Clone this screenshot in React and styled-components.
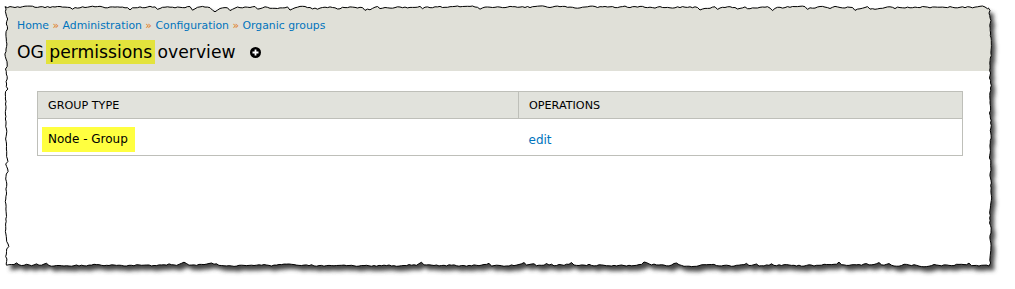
import React, { useMemo } from "react";
import styled, { createGlobalStyle } from "styled-components";

const Global = createGlobalStyle`
  html, body { margin: 0; padding: 0; background: #fff; }
  body { font-family: "DejaVu Sans", Verdana, sans-serif; }
`;

const PAPER_W = 989;
const PAPER_H = 263;

function makeEdge() {
  let seed = 12345;
  const r = () => {
    seed = (seed * 16807) % 2147483647;
    return seed / 2147483647;
  };
  const pts = [];
  let v = 2;
  const jit = (base, amp) => {
    v = v * 0.5 + (r() * amp) * 0.5 + (r() < 0.12 ? r() * amp : 0);
    return base + v;
  };
  for (let x = 1; x < PAPER_W - 4; x += 2.5) pts.push([x, jit(0.5, 3.2)]);
  v = 2;
  for (let y = 3; y < PAPER_H - 4; y += 2.5) pts.push([PAPER_W - 1 - jit(0, 3), y]);
  v = 2;
  for (let x = PAPER_W - 4; x > 2; x -= 2.5) pts.push([x, PAPER_H - 1 - jit(0, 3)]);
  v = 2;
  for (let y = PAPER_H - 4; y > 3; y -= 2.5) pts.push([jit(0.5, 3), y]);
  return "M" + pts.map(([a, b]) => `${a.toFixed(1)} ${b.toFixed(1)}`).join(" L") + " Z";
}

const Stage = styled.div`
  position: relative;
  width: 1015px;
  height: 289px;
  overflow: hidden;
  background: #fff;
  box-sizing: border-box;
  padding: 5px 0 0 4px;
`;

const Paper = styled.div`
  position: relative;
  z-index: 1;
  width: ${PAPER_W}px;
  height: ${PAPER_H}px;
  background: #fff;
`;

const Layer = styled.svg`
  position: absolute;
  left: ${(p) => p.$x}px;
  top: ${(p) => p.$y}px;
  width: ${PAPER_W + 10}px;
  height: ${PAPER_H + 10}px;
  z-index: ${(p) => p.$z};
  pointer-events: none;
  overflow: visible;
`;

const Header = styled.header`
  background: #e0e0d8;
  height: 66px;
  box-sizing: border-box;
  padding: 14px 0 0 13px;
`;

const Breadcrumb = styled.nav`
  font-size: 10.85px;
  line-height: 14px;
  color: #e07b1a;
  a { color: #0074bd; text-decoration: none; }
`;

const Title = styled.h1`
  margin: 7px 0 0;
  font-size: 17.2px;
  font-weight: normal;
  line-height: 24px;
  color: #000;
  display: flex;
  align-items: center;
`;

const Mark = styled.span`
  background: ${(p) => p.$color};
  padding: 0 ${(p) => p.$pad}px;
  margin: 0 ${(p) => -p.$pad}px;
  display: inline-block;
  line-height: ${(p) => p.$lh}px;
`;

const PlusIcon = styled.svg`
  width: 11px;
  height: 11px;
  margin-left: 14px;
  margin-top: 1px;
`;

const Content = styled.main`
  padding: 20px 30px 0 33px;
`;

const Table = styled.table`
  width: 100%;
  border-collapse: collapse;
  font-size: 11.2px;
  color: #000;
`;

const Th = styled.th`
  background: #e1e2dc;
  border: 1px solid #bebfb9;
  text-align: left;
  font-weight: normal;
  text-transform: uppercase;
  height: 27px;
  padding: 0 10px;
  width: ${(p) => p.$w || "auto"};
  box-sizing: border-box;
`;

const Td = styled.td`
  border-bottom: 1px solid #bebfb9;
  border-left: ${(p) => (p.$first ? "1px solid #bebfb9" : "none")};
  border-right: ${(p) => (p.$first ? "none" : "1px solid #bebfb9")};
  height: 37px;
  padding: 5px 10px 0 ${(p) => p.$pl}px;
  box-sizing: border-box;
  font-size: 12px;
  a { color: #0074bd; text-decoration: none; }
`;

const RowMark = styled(Mark)`
  margin: 0;
  padding: 0 7px 0 6px;
`;

export default function App() {
  const d = useMemo(makeEdge, []);
  const sep = <span> » </span>;
  return (
    <>
      <Global />
      <Stage>
        <Layer $x={8} $y={10} $z={0} viewBox={`0 0 ${PAPER_W + 10} ${PAPER_H + 10}`}>
          <defs>
            <filter id="blur" x="-5%" y="-5%" width="110%" height="110%">
              <feGaussianBlur stdDeviation="2" />
            </filter>
          </defs>
          <path d={d} fill="#444" filter="url(#blur)" />
        </Layer>
        <Paper style={{ clipPath: `path("${d}")` }}>
          <Header>
            <Breadcrumb>
              <a href="#">Home</a>{sep}<a href="#">Administration</a>{sep}
              <a href="#">Configuration</a>{sep}<a href="#">Organic groups</a>
            </Breadcrumb>
            <Title>
              <span>OG&nbsp;</span>
              <Mark $color="#e3e33c" $pad={3} $lh={24}>permissions</Mark>
              <span>&nbsp;overview</span>
              <PlusIcon viewBox="0 0 11 11">
                <circle cx="5.5" cy="5.5" r="5.5" fill="#000" />
                <path d="M5.5 2.5v6M2.5 5.5h6" stroke="#fff" strokeWidth="1.8" />
              </PlusIcon>
            </Title>
          </Header>
          <Content>
            <Table>
              <thead>
                <tr>
                  <Th $w="481px">Group type</Th>
                  <Th>Operations</Th>
                </tr>
              </thead>
              <tbody>
                <tr>
                  <Td $first $pl={4}>
                    <RowMark $color="#ffff40" $pad={6} $lh={25}>Node - Group</RowMark>
                  </Td>
                  <Td $pl={10}><a href="#">edit</a></Td>
                </tr>
              </tbody>
            </Table>
          </Content>
        </Paper>
        <Layer $x={4} $y={5} $z={2} viewBox={`0 0 ${PAPER_W + 10} ${PAPER_H + 10}`}>
          <path d={d} fill="none" stroke="#000" strokeWidth="1" />
        </Layer>
      </Stage>
    </>
  );
}
